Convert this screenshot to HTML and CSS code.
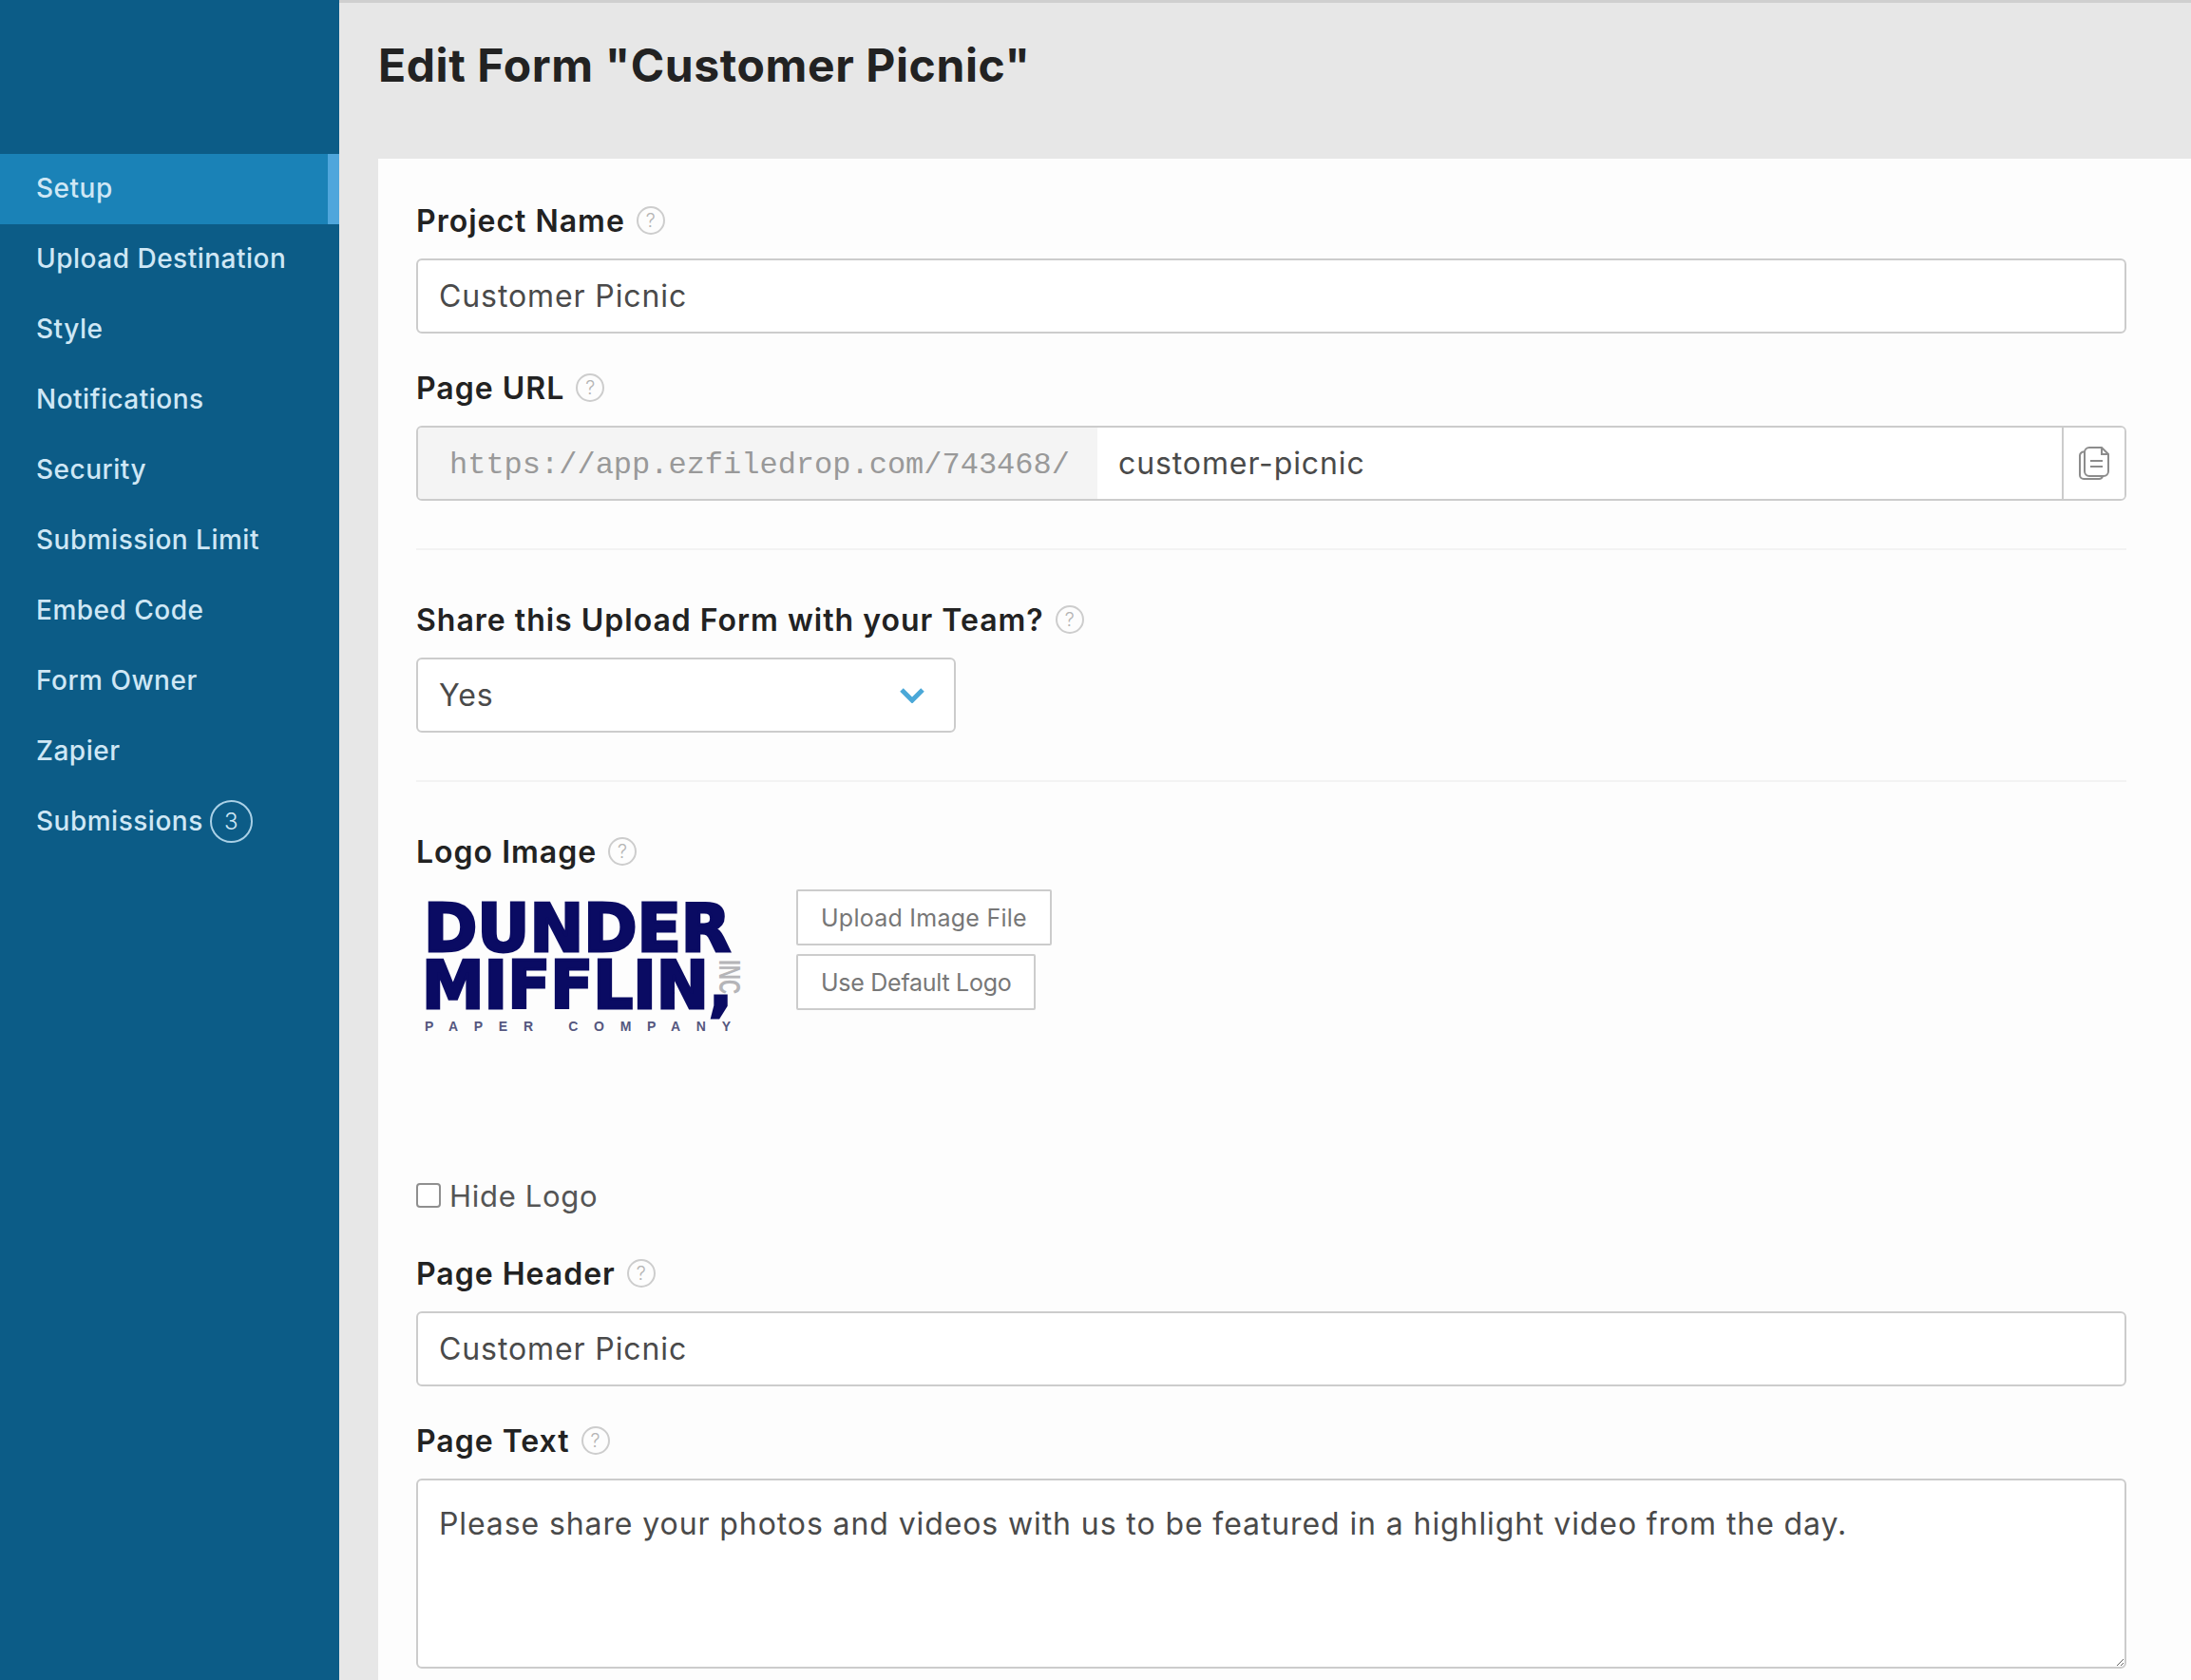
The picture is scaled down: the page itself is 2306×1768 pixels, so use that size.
FILE: index.html
```html
<!DOCTYPE html>
<html lang="en">
<head>
    <meta charset="UTF-8">
    <meta name="viewport" content="width=device-width, initial-scale=1.0">
    <title>Edit Form "Customer Picnic"</title>
    <link rel="stylesheet" href="styles.css">
</head>
<body>
    <nav class="sidebar">
        <a class="nav-item active">Setup</a>
        <a class="nav-item">Upload Destination</a>
        <a class="nav-item">Style</a>
        <a class="nav-item">Notifications</a>
        <a class="nav-item">Security</a>
        <a class="nav-item">Submission Limit</a>
        <a class="nav-item">Embed Code</a>
        <a class="nav-item">Form Owner</a>
        <a class="nav-item">Zapier</a>
        <a class="nav-item">Submissions <span class="badge">3</span></a>
    </nav>
    <main class="main">
        <h1 class="page-title">Edit Form "Customer Picnic"</h1>
        <form class="card">
            <label class="field-label">Project Name <span class="help">?</span></label>
            <input class="text-input" type="text" value="Customer Picnic">

            <label class="field-label label-url">Page URL <span class="help">?</span></label>
            <div class="url-group">
                <span class="url-prefix">https://app.ezfiledrop.com/743468/</span>
                <input class="url-input" type="text" value="customer-picnic">
                <button class="copy-btn" type="button">
                    <svg width="32" height="36" viewBox="0 0 32 36" fill="none" stroke="#8c8c8c" stroke-width="2">
                        <path d="M6 5.5 H5 a4 4 0 0 0 -4 4 V30 a4 4 0 0 0 4 4 H21 a4 4 0 0 0 4 -3"/>
                        <path d="M11 1 H24 L31 8 V26 a5 5 0 0 1 -5 5 H11 a5 5 0 0 1 -5 -5 V6 a5 5 0 0 1 5 -5 Z"/>
                        <path d="M24 1 V8 H31"/>
                        <path d="M12 15 H25 M12 21 H25"/>
                    </svg>
                </button>
            </div>

            <hr class="divider">

            <label class="field-label">Share this Upload Form with your Team? <span class="help">?</span></label>
            <div class="select-wrap">
                <select class="select-input">
                    <option>Yes</option>
                </select>
                <svg class="chevron" width="26" height="16" viewBox="0 0 26 16" fill="none" stroke="#4ba8d8" stroke-width="5">
                    <path d="M2 2 L13 13 L24 2"/>
                </svg>
            </div>

            <hr class="divider">

            <label class="field-label">Logo Image <span class="help">?</span></label>
            <div class="logo-row">
                <svg class="logo" width="360" height="146" viewBox="0 0 360 146">
                    <text class="logo-inc" transform="translate(316 66) rotate(90)" textLength="42" lengthAdjust="spacingAndGlyphs">INC.</text>
                    <g class="logo-main">
                        <text x="5" y="57" textLength="323" lengthAdjust="spacingAndGlyphs">DUNDER</text>
                        <text x="3" y="117" textLength="327" lengthAdjust="spacingAndGlyphs">MIFFLIN,</text>
                    </g>
                    <text class="logo-sub" x="6" y="141" textLength="322">PAPER COMPANY</text>
                </svg>
                <div class="logo-buttons">
                    <button class="plain-btn btn-upload" type="button">Upload Image File</button>
                    <button class="plain-btn btn-default" type="button">Use Default Logo</button>
                </div>
            </div>

            <label class="check-row"><input class="check-box" type="checkbox"> Hide Logo</label>

            <label class="field-label label-header">Page Header <span class="help">?</span></label>
            <input class="text-input" type="text" value="Customer Picnic">

            <label class="field-label label-url">Page Text <span class="help">?</span></label>
            <textarea class="text-area">Please share your photos and videos with us to be featured in a highlight video from the day.</textarea>
        </form>
    </main>
</body>
</html>
```

FILE: styles.css
```css
* { box-sizing: border-box; }
html, body { height: 100%; }
body {
    margin: 0;
    display: flex;
    overflow: hidden;
    font-family: Inter, "Open Sans", sans-serif;
    background-color: #e7e7e7;
    color: #222;
}

.sidebar {
    width: 357px;
    flex-shrink: 0;
    padding-top: 162px;
    background-color: #0c5c87;
}
.nav-item {
    height: 74px;
    display: flex;
    align-items: center;
    gap: 7px;
    padding-left: 38px;
    padding-bottom: 2px;
    font-size: 28px;
    font-weight: 500;
    letter-spacing: 0.5px;
    color: #cfe7f5;
}
.nav-item.active {
    background-color: #1a82b7;
    border-right: 12px solid #4fa6dc;
}
.badge {
    width: 45px;
    height: 45px;
    display: flex;
    align-items: center;
    justify-content: center;
    border: 2px solid #a9d0e6;
    border-radius: 50%;
    font-size: 24px;
    font-weight: 300;
    letter-spacing: 0;
}

.main {
    flex: 1;
    min-width: 0;
    padding-left: 41px;
    border-top: 3px solid #cfcfcf;
}
.page-title {
    height: 164px;
    margin: 0;
    padding-top: 36px;
    font-size: 48px;
    line-height: 60px;
    font-weight: 700;
    letter-spacing: 0.6px;
    color: #222;
}

.card {
    height: 1640px;
    padding: 45px 68px 0 40px;
    background-color: #fdfdfd;
}
.field-label {
    display: flex;
    align-items: center;
    gap: 12px;
    height: 40px;
    margin-bottom: 20px;
    font-size: 32px;
    font-weight: 600;
    letter-spacing: 1px;
    color: #222;
}
.label-url { margin-top: 37px; }
.label-header { margin-top: 42px; }
.help {
    width: 30px;
    height: 30px;
    display: flex;
    align-items: center;
    justify-content: center;
    border: 2px solid #cdcdcd;
    border-radius: 50%;
    font-size: 20px;
    font-weight: 300;
    letter-spacing: 0;
    color: #b5b5b5;
}

.text-input, .url-input, .select-input, .text-area {
    font-family: Inter, "Open Sans", sans-serif;
    font-size: 32px;
    letter-spacing: 0.9px;
    color: #4a4a4a;
    background-color: #fff;
}
.text-input {
    width: 100%;
    height: 79px;
    padding: 0 22px;
    border: 2px solid #ccc;
    border-radius: 6px;
    display: block;
}

.url-group {
    height: 79px;
    display: flex;
    border: 2px solid #ccc;
    border-radius: 6px;
    overflow: hidden;
}
.url-prefix {
    width: 715px;
    padding: 3px 0 0 33px;
    display: flex;
    align-items: center;
    background-color: #f4f4f4;
    font-family: "Liberation Mono", monospace;
    font-size: 32px;
    color: #999;
    white-space: nowrap;
}
.url-input {
    flex: 1;
    min-width: 0;
    padding: 0 22px;
    border: none;
}
.copy-btn {
    width: 66px;
    padding: 0;
    display: flex;
    align-items: center;
    justify-content: center;
    border: none;
    border-left: 2px solid #ccc;
    background-color: #fff;
}

.divider {
    height: 2px;
    margin: 50px 0 53px;
    border: none;
    background-color: #f3f3f3;
}

.select-wrap {
    position: relative;
    width: 568px;
}
.select-input {
    width: 100%;
    height: 79px;
    padding: 0 22px;
    border: 2px solid #ccc;
    border-radius: 6px;
    appearance: none;
    -webkit-appearance: none;
}
.chevron {
    position: absolute;
    top: 32px;
    right: 33px;
}

.logo-row {
    display: flex;
    gap: 37px;
    height: 302px;
}
.logo { margin: 8px 0 0 3px; }
.logo-main text {
    font-family: "DejaVu Sans", sans-serif;
    font-weight: 700;
    font-size: 69px;
    fill: #0a0b63;
    stroke: #0a0b63;
    stroke-width: 3px;
}
.logo-inc {
    font-family: "Liberation Sans", sans-serif;
    font-weight: 700;
    font-size: 32px;
    fill: #b5b5b8;
}
.logo-sub {
    font-family: "Liberation Sans", sans-serif;
    font-weight: 700;
    font-size: 14px;
    fill: #55577f;
}
.logo-buttons {
    display: flex;
    flex-direction: column;
    align-items: flex-start;
    gap: 9px;
}
.plain-btn {
    height: 59px;
    padding: 0 24px;
    border: 2px solid #ccc;
    border-radius: 2px;
    background-color: #fff;
    font-family: Inter, "Open Sans", sans-serif;
    font-size: 25px;
    color: #777;
}
.btn-upload { letter-spacing: 0.25px; }
.btn-default { letter-spacing: -0.27px; }

.check-row {
    display: flex;
    align-items: center;
    gap: 9px;
    height: 40px;
    font-size: 31px;
    letter-spacing: 0.7px;
    color: #555;
}
.check-box {
    width: 26px;
    height: 26px;
    margin: 0;
    appearance: none;
    -webkit-appearance: none;
    border: 2px solid #8f8f8f;
    border-radius: 4px;
    background-color: #fff;
}

.text-area {
    width: 100%;
    height: 200px;
    padding: 26px 22px;
    border: 2px solid #ccc;
    border-radius: 6px;
    display: block;
    line-height: 40px;
}
```
